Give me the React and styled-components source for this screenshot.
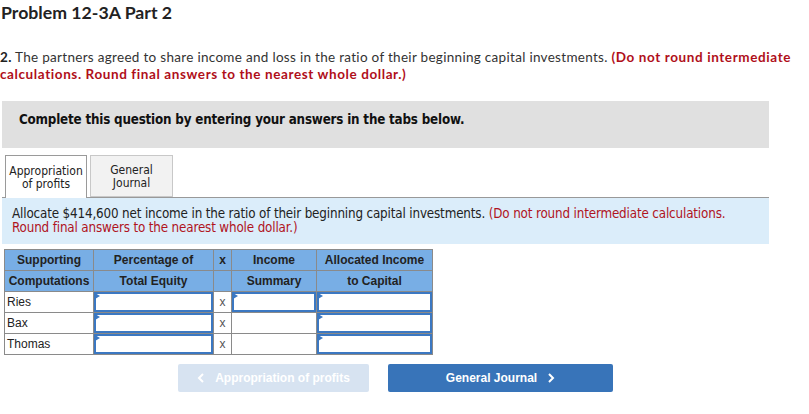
import React from "react";
import styled, { createGlobalStyle } from "styled-components";

const Global = createGlobalStyle`
  body {
    margin: 0;
    background: #fff;
    font-family: "Liberation Sans", Arial, sans-serif;
  }
`;

const Page = styled.div`
  width: 809px;
  overflow: hidden;
`;

const Title = styled.h1`
  margin: 0;
  padding: 3px 0 0 1px;
  font-family: Lato, "Open Sans", sans-serif;
  font-weight: 700;
  font-size: 17.7px;
  line-height: 20px;
  color: #222;
`;

const Prompt = styled.p`
  margin: 26px 0 0 0;
  width: 809px;
  font-family: Lato, "Open Sans", sans-serif;
  font-size: 13.5px;
  line-height: 17px;
  color: #333;
  letter-spacing: 0.3px;

  b {
    color: #222;
  }

  strong {
    color: #b00f1a;
    letter-spacing: 0.6px;
  }
`;

const Wrap = styled.div`
  width: 767px;
  margin-left: 2px;
`;

const Banner = styled.div`
  margin-top: 18px;
  height: 47px;
  box-sizing: border-box;
  background: #e0e0e0;
  padding: 11px 0 0 17px;
  font-family: "DejaVu Sans Condensed", "DejaVu Sans", sans-serif;
  font-weight: 700;
  font-size: 13.3px;
  line-height: 16px;
  letter-spacing: -0.2px;
  color: #111;
`;

const TabBar = styled.div`
  margin-top: 7px;
  display: flex;
  gap: 3px;
  padding-left: 3px;
  border-bottom: 1px solid #999;
`;

const Tab = styled.div`
  width: ${(p) => (p.$active ? "82px" : "83px")};
  height: ${(p) => (p.$active ? "43px" : "42px")};
  margin-bottom: ${(p) => (p.$active ? "-1px" : "0")};
  border: 1px solid ${(p) => (p.$active ? "#9a9a9a" : "#c8c8c8")};
  border-bottom: ${(p) => (p.$active ? "none" : "1px solid #c8c8c8")};
  background: ${(p) => (p.$active ? "#fff" : "#f2f2f2")};
  display: flex;
  align-items: center;
  justify-content: center;
  text-align: center;
  font-family: "DejaVu Sans Condensed", "DejaVu Sans", sans-serif;
  font-size: 12px;
  line-height: 13px;
  color: #222;
  box-sizing: border-box;
  padding-top: 1px;
`;

const Info = styled.div`
  background: #dbedfa;
  height: 46px;
  box-sizing: border-box;
  padding: 9px 10px 0 10px;
  font-family: "DejaVu Sans Condensed", "DejaVu Sans", sans-serif;
  font-size: 13.3px;
  line-height: 14px;
  color: #222;
  letter-spacing: -0.15px;

  span {
    color: #b0141e;
  }
`;

const Table = styled.table`
  margin: 5px 0 0 2px;
  border-collapse: collapse;
  font-family: "Liberation Sans", Arial, sans-serif;
  font-size: 12px;
  color: #222;
  border: 1px solid #8a8a8a;
`;

const Th = styled.th`
  background: #78aee5;
  font-weight: 700;
  height: 20px;
  padding: 0 2px;
  border-left: 1px solid #8a8a8a;
  border-right: 1px solid #8a8a8a;
  border-top: ${(p) => (p.$second ? "1px solid #8a8a8a" : "none")};
  width: ${(p) => p.$w}px;
  text-align: center;
  white-space: nowrap;
  color: #222;
`;

const Td = styled.td`
  height: 20px;
  padding: ${(p) => (p.$field ? "0" : "0 2px")};
  border: 1px solid #8a8a8a;
  text-align: ${(p) => (p.$center ? "center" : "left")};
  color: ${(p) => (p.$center ? "#555" : "#222")};
  vertical-align: middle;
`;

const Field = styled.div`
  position: relative;
  height: 20px;
  box-sizing: border-box;
  border: 2px solid #3b78c2;
  background: #fff;

  &::before {
    content: "";
    position: absolute;
    left: -1px;
    top: -1px;
    border-top: 3px solid transparent;
    border-bottom: 3px solid transparent;
    border-left: 5px solid #3b78c2;
  }
`;

const Nav = styled.div`
  display: flex;
  gap: 19px;
  margin: 9px 0 0 178px;
`;

const NavButton = styled.div`
  height: 28px;
  width: ${(p) => p.$w}px;
  border-radius: 2px;
  background: ${(p) => (p.$disabled ? "#d7e3f1" : "#3874b9")};
  color: #fff;
  display: flex;
  align-items: center;
  justify-content: center;
  gap: 10px;
  font-family: "Liberation Sans", Arial, sans-serif;
  font-weight: 700;
  font-size: 12px;
`;

const Chevron = ({ dir }) => (
  <svg width="8" height="10" viewBox="0 0 8 10">
    <path
      d={dir === "left" ? "M6 1 L2 5 L6 9" : "M2 1 L6 5 L2 9"}
      fill="none"
      stroke="#fff"
      strokeWidth="2"
    />
  </svg>
);

const rows = [
  { name: "Ries", income: true },
  { name: "Bax", income: false },
  { name: "Thomas", income: false },
];

export default function App() {
  return (
    <Page>
      <Global />
      <Title>Problem 12-3A Part 2</Title>
      <Prompt>
        <b>2.</b> The partners agreed to share income and loss in the ratio of their beginning capital
        investments. <strong>(Do not round intermediate</strong>
        <br />
        <strong>calculations. Round final answers to the nearest whole dollar.)</strong>
      </Prompt>
      <Wrap>
        <Banner>Complete this question by entering your answers in the tabs below.</Banner>
        <TabBar>
          <Tab $active>
            Appropriation
            <br />
            of profits
          </Tab>
          <Tab>
            General
            <br />
            Journal
          </Tab>
        </TabBar>
        <Info>
          Allocate $414,600 net income in the ratio of their beginning capital investments.{" "}
          <span>
            (Do not round intermediate calculations.
            <br />
            Round final answers to the nearest whole dollar.)
          </span>
        </Info>
        <Table>
          <thead>
            <tr>
              <Th $w={84}>Supporting</Th>
              <Th $w={115}>Percentage of</Th>
              <Th $w={13}>x</Th>
              <Th $w={80}>Income</Th>
              <Th $w={111}>Allocated Income</Th>
            </tr>
            <tr>
              <Th $second>Computations</Th>
              <Th $second>Total Equity</Th>
              <Th $second></Th>
              <Th $second>Summary</Th>
              <Th $second>to Capital</Th>
            </tr>
          </thead>
          <tbody>
            {rows.map((r) => (
              <tr key={r.name}>
                <Td>{r.name}</Td>
                <Td $field>
                  <Field />
                </Td>
                <Td $center>x</Td>
                <Td $field>{r.income && <Field />}</Td>
                <Td $field>
                  <Field />
                </Td>
              </tr>
            ))}
          </tbody>
        </Table>
      </Wrap>
      <Nav>
        <NavButton $disabled $w={191}>
          <Chevron dir="left" />
          Appropriation of profits
        </NavButton>
        <NavButton $w={225}>
          General Journal
          <Chevron dir="right" />
        </NavButton>
      </Nav>
    </Page>
  );
}
